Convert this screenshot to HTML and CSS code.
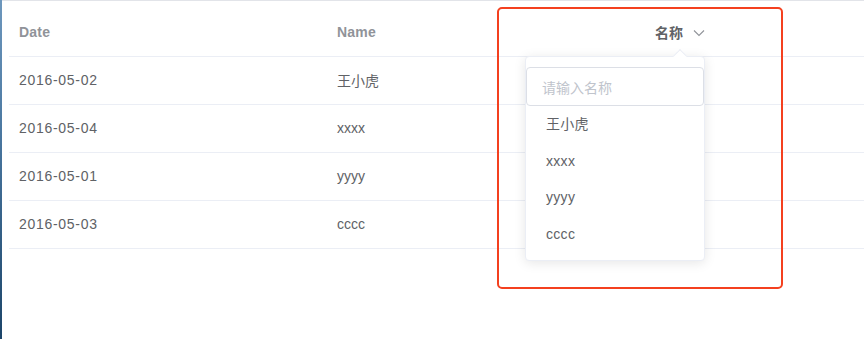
FILE: index.html
```html
<!DOCTYPE html>
<html lang="zh">
<head>
<meta charset="utf-8">
<title>Table filter</title>
<link rel="stylesheet" href="styles.css">
</head>
<body>
<div class="frame">
  <div class="edge"></div>
  <div class="main">
    <div class="table">
      <div class="row head">
        <div class="cell">Date</div>
        <div class="cell">Name</div>
        <div class="cell filter-cell">
          <span class="filter-title">名称</span>
          <svg class="chev" width="12" height="8" viewBox="0 0 12 8"><path d="M1 1.5 L6 6.5 L11 1.5" fill="none" stroke="#909399" stroke-width="1.1"/></svg>
        </div>
      </div>
      <div class="row"><div class="cell date">2016-05-02</div><div class="cell">王小虎</div><div class="cell"></div></div>
      <div class="row"><div class="cell date">2016-05-04</div><div class="cell">xxxx</div><div class="cell"></div></div>
      <div class="row"><div class="cell date">2016-05-01</div><div class="cell">yyyy</div><div class="cell"></div></div>
      <div class="row"><div class="cell date">2016-05-03</div><div class="cell">cccc</div><div class="cell"></div></div>
    </div>

    <div class="popover">
      <div class="arrow"></div>
      <div class="input"><span class="placeholder">请输入名称</span></div>
      <ul class="options">
        <li>王小虎</li>
        <li>xxxx</li>
        <li>yyyy</li>
        <li>cccc</li>
      </ul>
    </div>

    <div class="highlight"></div>
  </div>
</div>
</body>
</html>
```

FILE: styles.css
```css
* { box-sizing: border-box; }
html, body {
  margin: 0;
  padding: 0;
  background: #fff;
}
body {
  font-family: "Liberation Sans", "Noto Sans CJK SC", sans-serif;
  font-size: 14px;
  color: #606266;
}
.frame {
  display: flex;
  width: 864px;
  height: 339px;
  overflow: hidden;
}
.edge {
  width: 2px;
  flex: none;
  background: linear-gradient(to bottom, #6d97bd 0%, #4a77a0 40%, #1c4569 100%);
}
.main {
  position: relative;
  flex: 1;
  border-top: 1px solid #e2e4e9;
  padding: 8px 0 0 7px;
}
.table {
  display: flex;
  flex-direction: column;
}
.row {
  display: grid;
  grid-template-columns: 318px 318px 1fr;
  height: 48px;
  border-bottom: 1px solid #ebeef5;
  align-items: center;
  padding-bottom: 1px;
}
.cell {
  padding: 0 10px;
  white-space: nowrap;
}
.cell.date {
  letter-spacing: 0.7px;
}
.head .cell {
  color: #909399;
  font-weight: bold;
  letter-spacing: 0.2px;
}
.head .filter-cell {
  display: flex;
  align-items: center;
  color: #606266;
  padding-left: 10px;
}
.filter-title {
  font-weight: bold;
  letter-spacing: 0;
}
.chev {
  margin-left: 10px;
  margin-top: 1px;
}
.popover {
  position: absolute;
  left: 523px;
  top: 55px;
  width: 180px;
  height: 205px;
  background: #fff;
  border: 1px solid #ebeef5;
  border-radius: 4px;
  box-shadow: 0 2px 12px rgba(0, 0, 0, 0.1);
  padding: 10px 0 0 0;
}
.arrow {
  position: absolute;
  top: -6px;
  left: 149px;
  width: 10px;
  height: 10px;
  background: #fff;
  border-left: 1px solid #ebeef5;
  border-top: 1px solid #ebeef5;
  transform: rotate(45deg);
}
.input {
  height: 39px;
  margin: 0;
  border: 1px solid #dcdfe6;
  border-radius: 4px;
  padding: 0 15px;
  display: flex;
  align-items: center;
  background: #fff;
  position: relative;
}
.placeholder {
  color: #c0c4cc;
}
.options {
  list-style: none;
  margin: 0;
  padding: 0;
}
.options li {
  height: 36.7px;
  line-height: 36.7px;
  padding-left: 20px;
  color: #606266;
  letter-spacing: 0.3px;
}
.highlight {
  position: absolute;
  left: 495px;
  top: 6px;
  width: 286px;
  height: 282px;
  border: 2.5px solid #f4401f;
  border-radius: 5px;
  pointer-events: none;
}
```
